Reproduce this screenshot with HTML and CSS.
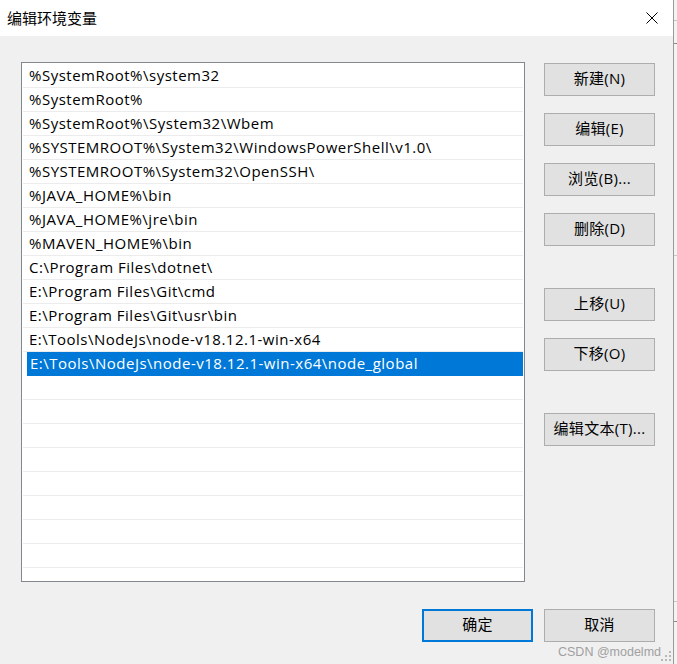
FILE: index.html
```html
<!DOCTYPE html>
<html lang="zh">
<head>
<meta charset="utf-8">
<title>编辑环境变量</title>
<link rel="stylesheet" href="styles.css">
</head>
<body>
<div class="screen">
  <div class="dialog">
    <div class="titlebar">
      <span class="title">编辑环境变量</span>
      <svg class="close" width="12" height="12" viewBox="0 0 12 12"><path d="M0.5 0.5 L11.5 11.5 M11.5 0.5 L0.5 11.5" stroke="#000" stroke-width="1" fill="none"/></svg>
    </div>
    <div class="content">
      <div class="main">
        <div class="list">
          <div class="row">%SystemRoot%\system32</div>
          <div class="row">%SystemRoot%</div>
          <div class="row">%SystemRoot%\System32\Wbem</div>
          <div class="row">%SYSTEMROOT%\System32\WindowsPowerShell\v1.0\</div>
          <div class="row">%SYSTEMROOT%\System32\OpenSSH\</div>
          <div class="row">%JAVA_HOME%\bin</div>
          <div class="row">%JAVA_HOME%\jre\bin</div>
          <div class="row">%MAVEN_HOME%\bin</div>
          <div class="row">C:\Program Files\dotnet\</div>
          <div class="row">E:\Program Files\Git\cmd</div>
          <div class="row">E:\Program Files\Git\usr\bin</div>
          <div class="row">E:\Tools\NodeJs\node-v18.12.1-win-x64</div>
          <div class="row selected">E:\Tools\NodeJs\node-v18.12.1-win-x64\node_global</div>
          <div class="row"></div>
          <div class="row"></div>
          <div class="row"></div>
          <div class="row"></div>
          <div class="row"></div>
          <div class="row"></div>
          <div class="row"></div>
          <div class="row"></div>
        </div>
        <div class="side">
          <div class="group">
            <button class="btn">新建(N)</button>
            <button class="btn">编辑(E)</button>
            <button class="btn">浏览(B)...</button>
            <button class="btn">删除(D)</button>
          </div>
          <div class="group">
            <button class="btn">上移(U)</button>
            <button class="btn">下移(O)</button>
          </div>
          <div class="group">
            <button class="btn">编辑文本(T)...</button>
          </div>
        </div>
      </div>
      <div class="footer">
        <button class="btn default">确定</button>
        <button class="btn">取消</button>
      </div>
      <div class="bottomline">
        <span class="watermark">CSDN @modelmd</span>
        <svg class="grip" width="12" height="12" viewBox="0 0 12 12">
          <rect x="9" y="1" width="2" height="2" fill="#b8b8b8"/>
          <rect x="5" y="5" width="2" height="2" fill="#b8b8b8"/>
          <rect x="9" y="5" width="2" height="2" fill="#b8b8b8"/>
          <rect x="1" y="9" width="2" height="2" fill="#b8b8b8"/>
          <rect x="5" y="9" width="2" height="2" fill="#b8b8b8"/>
          <rect x="9" y="9" width="2" height="2" fill="#b8b8b8"/>
        </svg>
      </div>
    </div>
  </div>
  <div class="behind">
    <div class="seg s1"></div>
    <div class="seg s2"></div>
    <div class="seg s3"></div>
    <div class="seg s4"></div>
    <div class="seg s5"></div>
  </div>
</div>
</body>
</html>
```
FILE: styles.css
```css
* { box-sizing: border-box; }
html, body {
  margin: 0;
  padding: 0;
  background: #f0f0f0;
}
body {
  font-family: "Open Sans", "Noto Sans CJK SC", sans-serif;
  font-size: 15px;
  color: #000;
}
.screen {
  display: flex;
  width: 677px;
  height: 664px;
  overflow: hidden;
}
.dialog {
  width: 674px;
  height: 664px;
  background: #f0f0f0;
  border-right: 1px solid #9a9a9a;
  display: flex;
  flex-direction: column;
}
.titlebar {
  height: 36px;
  background: #fff;
  display: flex;
  align-items: center;
  justify-content: space-between;
  padding: 0 15px 0 7px;
}
.title {
  font-family: "Noto Sans CJK SC", sans-serif;
  font-size: 15px;
  line-height: 20px;
  margin-top: -1px;
}
.close { display: block; }
.content {
  padding: 26px 18px 0 21px;
  display: flex;
  flex-direction: column;
}
.main {
  display: flex;
  gap: 19px;
}
.list {
  width: 504px;
  height: 520px;
  background: #fff;
  border: 1px solid #828790;
  padding: 1px 1px 0 1px;
  overflow: hidden;
}
.row {
  height: 24px;
  border-bottom: 1px solid #ececec;
  padding-left: 6px;
  line-height: 23px;
  letter-spacing: 0.5px;
  white-space: nowrap;
}
.selected {
  margin-left: 4px;
  padding-left: 3px;
  background: #0078d7;
  color: #fff;
  border-bottom-color: #0078d7;
}
.side {
  display: flex;
  flex-direction: column;
  gap: 42px;
  padding-top: 1px;
}
.group {
  display: flex;
  flex-direction: column;
  gap: 17px;
}
.btn {
  width: 111px;
  height: 33px;
  background: #e1e1e1;
  border: 1px solid #adadad;
  border-radius: 0;
  font-family: "Open Sans", "Noto Sans CJK SC", sans-serif;
  font-size: 15px;
  line-height: 20px;
  letter-spacing: 0.3px;
  color: #000;
  padding: 0 0 3px 0;
  margin: 0;
}
.default {
  border: 2px solid #0078d7;
}
.footer {
  display: flex;
  justify-content: flex-end;
  gap: 11px;
  margin-top: 27px;
}
.bottomline {
  display: flex;
  justify-content: flex-end;
  align-items: flex-end;
  margin-top: 2px;
  margin-right: -18px;
  padding-right: 1px;
}
.watermark {
  font-family: "Liberation Sans", sans-serif;
  font-size: 12.5px;
  color: #a0a0a0;
  line-height: 16px;
  margin-right: -1px;
  margin-bottom: 3px;
}
.grip { display: block; margin-bottom: 1px; }
.behind {
  flex: 1;
  background: #f3f3f3;
  display: flex;
  flex-direction: column;
}
.seg { border-bottom: 1px solid #c8c8c8; }
.s1 { height: 21px; }
.s2 { height: 23px; border-bottom-color: #8a8a8a; }
.s3 { height: 212px; }
.s4 { height: 346px; }
.s5 { height: 20px; border-bottom-color: #8a8a8a; }
```
